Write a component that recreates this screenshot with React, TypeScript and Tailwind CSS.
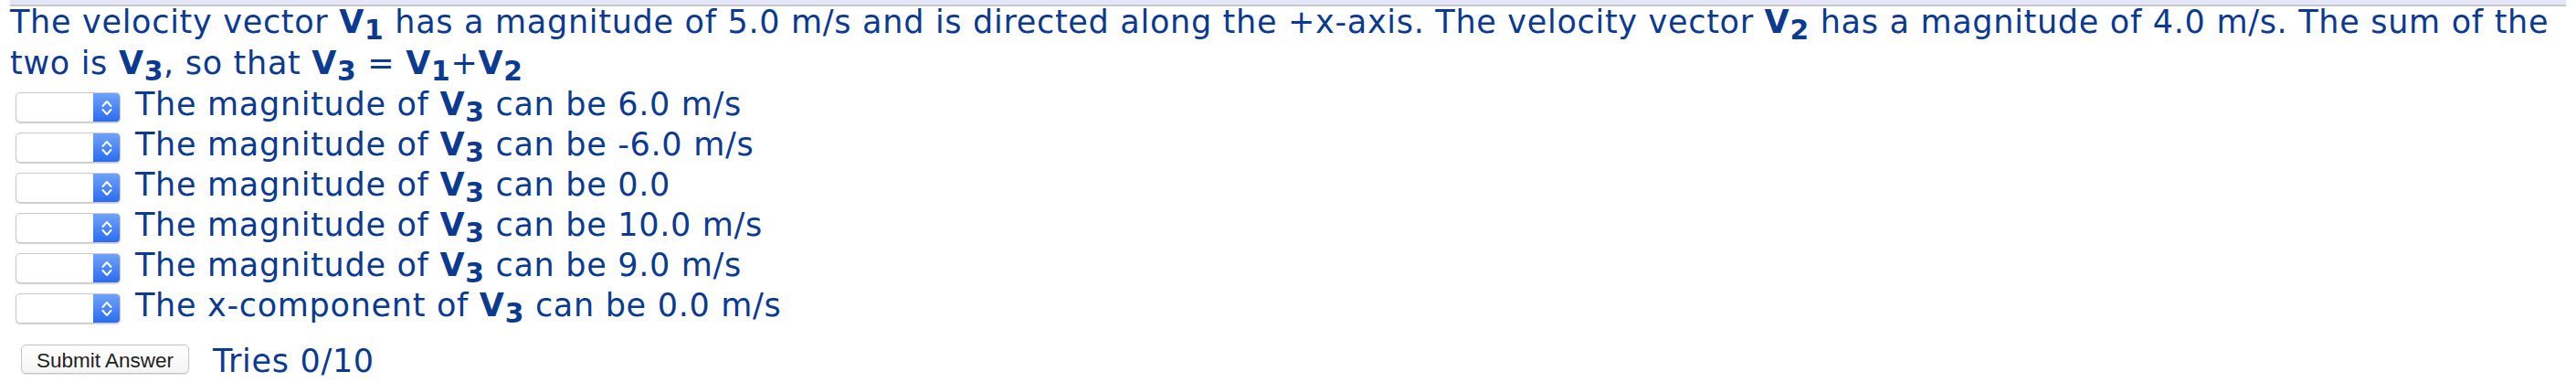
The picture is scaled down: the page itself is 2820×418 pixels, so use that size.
import React from "react";

const V = ({ n }: { n: number }) => (
  <b className="font-bold">
    V<sub className="text-[0.85em]">{n}</sub>
  </b>
);

const options: React.ReactNode[] = [
  <>The magnitude of <V n={3} /> can be 6.0 m/s</>,
  <>The magnitude of <V n={3} /> can be -6.0 m/s</>,
  <>The magnitude of <V n={3} /> can be 0.0</>,
  <>The magnitude of <V n={3} /> can be 10.0 m/s</>,
  <>The magnitude of <V n={3} /> can be 9.0 m/s</>,
  <>The x-component of <V n={3} /> can be 0.0 m/s</>,
];

function Picker() {
  return (
    <div className="relative mt-[9px] ml-[6px] h-[33px] w-[115px] shrink-0 rounded-[5px] border border-[#c9c9c9] bg-white shadow-[0_1px_1px_rgba(0,0,0,0.18)] overflow-hidden">
      <select className="h-full w-full appearance-none bg-transparent outline-none" defaultValue="">
        <option value=""></option>
        <option value="T">True</option>
        <option value="F">False</option>
      </select>
      <div className="pointer-events-none absolute right-0 top-0 flex h-full w-[29px] items-center justify-center bg-gradient-to-b from-[#6fa2f8] to-[#2a6bf2]">
        <svg width="12" height="20" viewBox="0 0 12 20" fill="none" stroke="white" strokeWidth="2" strokeLinecap="round" strokeLinejoin="round">
          <path d="M1.5 8 L6 3 L10.5 8" />
          <path d="M1.5 12 L6 17 L10.5 12" />
        </svg>
      </div>
    </div>
  );
}

export default function App() {
  return (
    <div className="w-full bg-white pl-[11px] pr-[11px] text-[#0b3a90] text-[35px] tracking-[0.7px]" style={{ fontFamily: '"DejaVu Sans", Verdana, sans-serif' }}>
      <div className="h-[7px] border-b-2 border-[#c8c8c8] bg-[#e6e6fa]" />
      <p className="-mt-[5px] leading-[45px]">
        The velocity vector <V n={1} /> has a magnitude of 5.0 m/s and is directed along the +x-axis. The velocity vector <V n={2} /> has a magnitude of 4.0 m/s. The sum of the two is <V n={3} />, so that <V n={3} /> = <V n={1} />+<V n={2} />
      </p>
      {options.map((o, i) => (
        <div key={i} className="flex h-[44px] items-start leading-[44px]">
          <Picker />
          <span className="ml-[16px] whitespace-nowrap">{o}</span>
        </div>
      ))}
      <div className="mt-[15px] flex items-center pb-[15px]">
        <button
          className="ml-[12px] h-[32px] w-[184px] rounded-[5px] border border-[#c6c6c6] bg-gradient-to-b from-white to-[#f4f4f4] text-[22.5px] tracking-normal text-[#222] shadow-[0_1px_1px_rgba(0,0,0,0.12)]"
          style={{ fontFamily: '"Liberation Sans", Arial, sans-serif' }}
        >
          Submit Answer
        </button>
        <span className="ml-[26px] leading-[44px] translate-y-[2px]">Tries 0/10</span>
      </div>
    </div>
  );
}
